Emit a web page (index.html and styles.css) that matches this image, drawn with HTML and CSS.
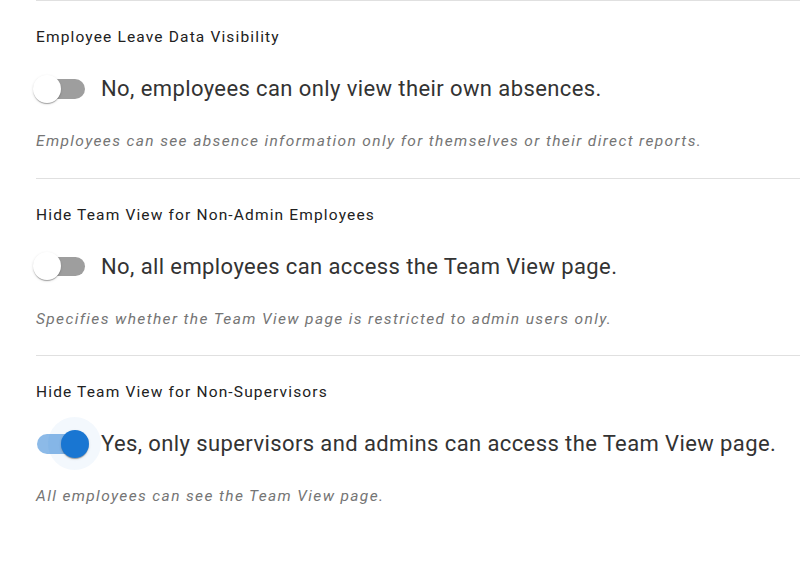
FILE: index.html
```html
<!DOCTYPE html>
<html lang="en">
<head>
<meta charset="utf-8">
<title>Team View Settings</title>
<link rel="stylesheet" href="styles.css">
</head>
<body>
<main class="settings">
  <section class="setting">
    <h3 class="setting-title">Employee Leave Data Visibility</h3>
    <label class="control">
      <span class="switch">
        <span class="track"></span>
        <span class="base"><span class="thumb"></span></span>
      </span>
      <span class="control-label">No, employees can only view their own absences.</span>
    </label>
    <p class="setting-desc">Employees can see absence information only for themselves or their direct reports.</p>
  </section>
  <section class="setting">
    <h3 class="setting-title">Hide Team View for Non-Admin Employees</h3>
    <label class="control">
      <span class="switch">
        <span class="track"></span>
        <span class="base"><span class="thumb"></span></span>
      </span>
      <span class="control-label">No, all employees can access the Team View page.</span>
    </label>
    <p class="setting-desc">Specifies whether the Team View page is restricted to admin users only.</p>
  </section>
  <section class="setting">
    <h3 class="setting-title">Hide Team View for Non-Supervisors</h3>
    <label class="control">
      <span class="switch is-checked">
        <span class="track"></span>
        <span class="base"><span class="thumb"></span></span>
      </span>
      <span class="control-label">Yes, only supervisors and admins can access the Team View page.</span>
    </label>
    <p class="setting-desc">All employees can see the Team View page.</p>
  </section>
</main>
</body>
</html>
```
FILE: styles.css
```css
* { box-sizing: border-box; }

html, body {
  margin: 0;
  padding: 0;
  background: #ffffff;
}

body {
  font-family: Roboto, "Liberation Sans", Arial, sans-serif;
  color: #212121;
}

.settings {
  padding-left: 36px;
}

.setting {
  border-top: 1px solid #e0e0e0;
  padding: 26px 0 26.5px;
  display: flex;
  flex-direction: column;
  gap: 15px;
}

.setting-title {
  margin: 0;
  font-size: 15.5px;
  line-height: 20px;
  font-weight: 400;
  letter-spacing: 1.15px;
  color: #212121;
}

.control {
  display: flex;
  align-items: center;
  margin-left: -16px;
  height: 53px;
}

.switch {
  position: relative;
  width: 81px;
  height: 53px;
  flex-shrink: 0;
}

.track {
  position: absolute;
  left: 17px;
  top: 17px;
  width: 47.6px;
  height: 19.6px;
  border-radius: 10px;
  background: #9e9e9e;
}

.base {
  position: absolute;
  left: 0;
  top: 0;
  width: 53px;
  height: 53px;
  border-radius: 50%;
}

.thumb {
  position: absolute;
  left: 12.6px;
  top: 12.6px;
  width: 28px;
  height: 28px;
  border-radius: 50%;
  background: #ffffff;
  box-shadow: 0 2px 1px -1px rgba(0,0,0,0.2), 0 1px 1px 0 rgba(0,0,0,0.14), 0 1px 3px 0 rgba(0,0,0,0.12);
}

.switch.is-checked .track {
  background: #8cbae8;
}

.switch.is-checked .base {
  left: 28px;
  background: rgba(25,118,210,0.05);
}

.switch.is-checked .thumb {
  background: #1976d2;
}

.control-label {
  font-size: 22px;
  line-height: 28px;
  padding-top: 1px;
  color: #333333;
  letter-spacing: 0.4px;
}

.setting-desc {
  margin: 0;
  padding-top: 1px;
  font-size: 15.5px;
  line-height: 20px;
  font-style: italic;
  color: #757575;
  letter-spacing: 1.37px;
}
```
